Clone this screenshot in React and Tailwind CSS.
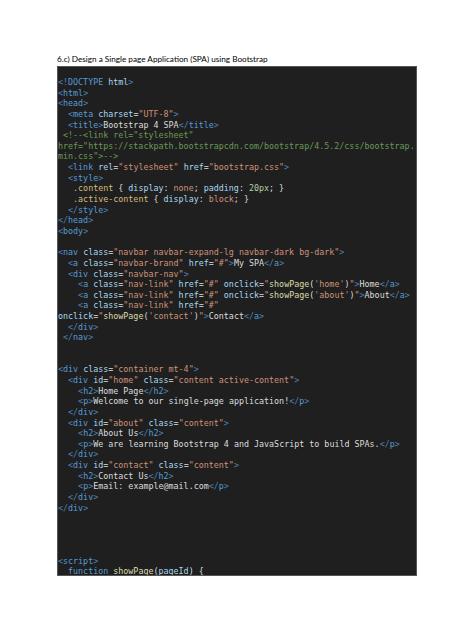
import React from "react";

const C = {
  p: "text-[#4f82b4]",
  t: "text-[#569cd6]",
  a: "text-[#a8d8f0]",
  s: "text-[#ce9178]",
  x: "text-[#dcdcdc]",
  c: "text-[#6a9955]",
  f: "text-[#dcdcaa]",
  n: "text-[#b5cea8]",
  sel: "text-[#d7ba7d]",
};

// tiny html highlighter, good enough for this snippet
const tokenize = (line) => {
  const out = [];
  const re = /<\/?!?|\/?>|"[^"]*"|=|[^<>"=\s]+|\s+/g;
  let inTag = false;
  let expectName = false;
  for (const m of line.matchAll(re)) {
    const s = m[0];
    if (s[0] === "<") {
      out.push([C.p, s]);
      inTag = true;
      expectName = true;
    } else if (inTag && (s === ">" || s === "/>")) {
      out.push([C.p, s]);
      inTag = false;
    } else if (inTag && expectName) {
      out.push([C.t, s]);
      expectName = false;
    } else if (inTag && s[0] === '"') {
      const call = s.match(/^"(\w+)\(('[^']*')\)"$/);
      if (call) {
        out.push([C.s, '"'], [C.f, call[1]], [C.x, "("], [C.s, call[2]], [C.x, ")"], [C.s, '"']);
      } else out.push([C.s, s]);
    } else if (inTag && /\S/.test(s) && s !== "=") {
      out.push([C.a, s]);
    } else out.push([C.x, s]);
  }
  return out;
};

const lines = [
  "<!DOCTYPE html>",
  "<html>",
  "<head>",
  '  <meta charset="UTF-8">',
  "  <title>Bootstrap 4 SPA</title>",
  [[C.c, ' <!--<link rel="stylesheet"']],
  [[C.c, 'href="https://stackpath.bootstrapcdn.com/bootstrap/4.5.2/css/bootstrap.']],
  [[C.c, 'min.css">-->']],
  '  <link rel="stylesheet" href="bootstrap.css">',
  "  <style>",
  [
    [C.x, "   "], [C.sel, ".content"], [C.x, " { "], [C.a, "display"], [C.x, ": "],
    [C.s, "none"], [C.x, "; "], [C.a, "padding"], [C.x, ": "], [C.n, "20px"], [C.x, "; }"],
  ],
  [
    [C.x, "   "], [C.sel, ".active-content"], [C.x, " { "], [C.a, "display"], [C.x, ": "],
    [C.s, "block"], [C.x, "; }"],
  ],
  "  </style>",
  "</head>",
  "<body>",
  "",
  '<nav class="navbar navbar-expand-lg navbar-dark bg-dark">',
  '  <a class="navbar-brand" href="#">My SPA</a>',
  '  <div class="navbar-nav">',
  "    <a class=\"nav-link\" href=\"#\" onclick=\"showPage('home')\">Home</a>",
  "    <a class=\"nav-link\" href=\"#\" onclick=\"showPage('about')\">About</a>",
  '    <a class="nav-link" href="#"',
  [
    [C.a, "onclick"], [C.x, "="], [C.s, '"'], [C.f, "showPage"], [C.x, "("], [C.s, "'contact'"],
    [C.x, ")"], [C.s, '"'], [C.p, ">"], [C.x, "Contact"], [C.p, "</"], [C.t, "a"], [C.p, ">"],
  ],
  "  </div>",
  " </nav>",
  "",
  "",
  '<div class="container mt-4">',
  '  <div id="home" class="content active-content">',
  "    <h2>Home Page</h2>",
  "    <p>Welcome to our single-page application!</p>",
  "  </div>",
  '  <div id="about" class="content">',
  "    <h2>About Us</h2>",
  "    <p>We are learning Bootstrap 4 and JavaScript to build SPAs.</p>",
  "  </div>",
  '  <div id="contact" class="content">',
  "    <h2>Contact Us</h2>",
  "    <p>Email: example@mail.com</p>",
  "  </div>",
  "</div>",
  "",
  "",
  "",
  "",
  "<script>",
  [
    [C.x, "  "], [C.t, "function"], [C.x, " "], [C.f, "showPage"], [C.x, "("], [C.a, "pageId"],
    [C.x, ") {"],
  ],
];

export default function App() {
  return (
    <div className="min-h-[632px] w-[474px] bg-white pl-[57px] pt-[53px]">
      <h1 className="font-['Lato',sans-serif] text-[8.2px] leading-[12px] text-black">
        6.c) Design a Single page Application (SPA) using Bootstrap
      </h1>
      <div className="mt-[1px] h-[510px] w-[360px] overflow-hidden border border-[#555] bg-[#1f1f1f] pt-[10px] font-['DejaVu_Sans_Mono',monospace] text-[8.35px] leading-[10.65px]">
        {lines.map((line, i) => {
          const toks = typeof line === "string" ? tokenize(line) : line;
          return (
            <div key={i} className="h-[10.65px] whitespace-pre">
              {toks.map(([cls, s], j) => (
                <span key={j} className={cls}>
                  {s}
                </span>
              ))}
            </div>
          );
        })}
      </div>
    </div>
  );
}
